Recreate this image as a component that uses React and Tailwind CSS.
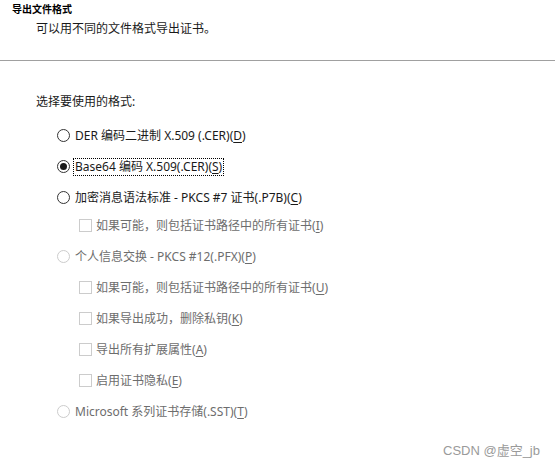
const font = { fontFamily: '"Noto Sans", "Noto Sans CJK SC", sans-serif' };

function Mnemonic({ k }) {
  return (
    <>
      (<span className="underline underline-offset-2">{k}</span>)
    </>
  );
}

function Radio({ checked, disabled }) {
  return (
    <span
      className={`flex h-[13px] w-[13px] shrink-0 items-center justify-center rounded-full border bg-white ${
        disabled ? "border-[#cccccc]" : "border-[#333333]"
      }`}
    >
      {checked && <span className="h-[7px] w-[7px] rounded-full bg-[#1a1a1a]" />}
    </span>
  );
}

function RadioRow({ label, k, checked, disabled, focused }) {
  return (
    <div className="flex h-[31px] items-center pl-[57px]">
      <Radio checked={checked} disabled={disabled} />
      <span
        className={`ml-[3px] px-[1px] leading-[16px] ${
          focused ? "border border-dotted border-black" : "border border-transparent"
        } ${disabled ? "text-[#6d6d6d]" : "text-[#1a1a1a]"}`}
      >
        {label}
        <Mnemonic k={k} />
      </span>
    </div>
  );
}

function CheckRow({ label, k, className = "" }) {
  return (
    <div className={`flex h-[31px] items-center pl-[79px] ${className}`}>
      <span className="h-[13px] w-[13px] shrink-0 border border-[#cccccc] bg-white" />
      <span className="ml-[4px] leading-[16px] text-[#6d6d6d]">
        {label}
        <Mnemonic k={k} />
      </span>
    </div>
  );
}

export default function App() {
  return (
    <div
      className="relative h-[469px] w-[555px] overflow-hidden bg-white text-[12px] text-[#1a1a1a]"
      style={font}
    >
      <div className="h-[60px]">
        <div className="pl-[12px] pt-[1px] text-[10px] font-bold leading-[16px] text-black">
          导出文件格式
        </div>
        <div className="pl-[36px] pt-[3px] leading-[18px]">可以用不同的文件格式导出证书。</div>
      </div>
      <div className="h-px bg-[#a0a0a0]" />

      <div className="pl-[36px] pt-[32px] leading-[18px]">选择要使用的格式:</div>

      <div className="mt-[9px] flex flex-col">
        <RadioRow label="DER 编码二进制 X.509 (.CER)" k="D" />
        <RadioRow label="Base64 编码 X.509(.CER)" k="S" checked focused />
        <RadioRow label="加密消息语法标准 - PKCS #7 证书(.P7B)" k="C" />
        <CheckRow label="如果可能，则包括证书路径中的所有证书" k="I" className="-mt-[3px]" />
        <RadioRow label="个人信息交换 - PKCS #12(.PFX)" k="P" disabled />
        <CheckRow label="如果可能，则包括证书路径中的所有证书" k="U" />
        <CheckRow label="如果导出成功，删除私钥" k="K" />
        <CheckRow label="导出所有扩展属性" k="A" />
        <CheckRow label="启用证书隐私" k="E" />
        <RadioRow label="Microsoft 系列证书存储(.SST)" k="T" disabled />
      </div>

      <div
        className="absolute right-[15px] bottom-[9px] text-[13px] text-[#9a9a9a]"
        style={{ fontFamily: '"Liberation Sans", "Noto Sans CJK SC", sans-serif' }}
      >
        CSDN @虚空_jb
      </div>
    </div>
  );
}
